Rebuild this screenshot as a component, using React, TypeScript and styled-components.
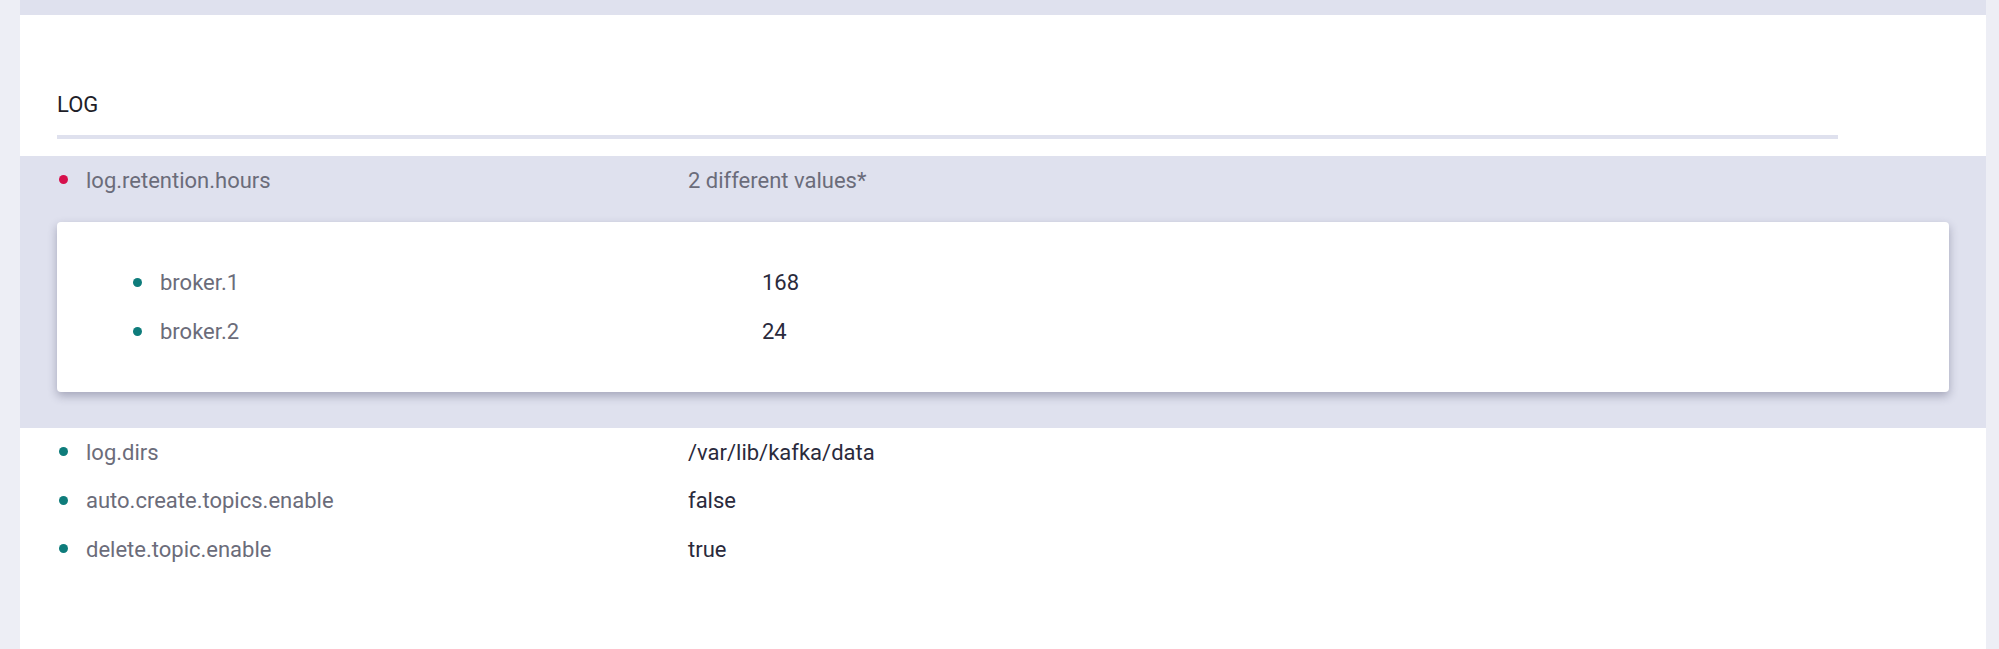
import React from "react";
import styled, { createGlobalStyle } from "styled-components";

const GlobalStyle = createGlobalStyle`
  html, body { margin: 0; padding: 0; }
  body {
    background: #edeef5;
    font-family: Roboto, "Liberation Sans", Arial, sans-serif;
    -webkit-font-smoothing: antialiased;
  }
`;

const Page = styled.div`
  display: flex;
  padding-left: 20px;
  padding-right: 13px;
  min-height: 649px;
`;

const Panel = styled.main`
  flex: 1;
  background: #ffffff;
  display: flex;
  flex-direction: column;
  min-height: 649px;
`;

const TopStrip = styled.div`
  height: 15px;
  background: #dfe1ee;
`;

const SectionHeader = styled.div`
  padding: 76.5px 148px 0 37px;
`;

const Title = styled.h2`
  margin: 0;
  font-size: 22px;
  line-height: 26px;
  font-weight: 400;
  color: #1e1e28;
  height: 26px;
`;

const Divider = styled.div`
  margin-top: 17.5px;
  height: 4px;
  background: #dfe1ee;
`;

const List = styled.div`
  margin-top: 17px;
  display: flex;
  flex-direction: column;
`;

const Expanded = styled.div`
  background: #dfe1ee;
  padding-bottom: 36px;
`;

const Row = styled.div<{ $height: number; $indent: number }>`
  display: grid;
  grid-template-columns: 9px 583px 1fr;
  column-gap: 19px;
  align-items: center;
  height: ${(p) => p.$height}px;
  padding-left: ${(p) => p.$indent}px;
  font-size: 22px;
`;

const Dot = styled.span<{ $color: string }>`
  width: 9px;
  height: 9px;
  border-radius: 50%;
  background: ${(p) => p.$color};
  margin-top: -1px;
`;

const Key = styled.span`
  color: #6b6c7a;
  white-space: nowrap;
  margin-left: -1px;
`;

const Value = styled.span<{ $muted?: boolean }>`
  color: ${(p) => (p.$muted ? "#6b6c7a" : "#2a2a3c")};
  white-space: nowrap;
  margin-left: -1px;
`;

const Card = styled.div`
  margin: 18px 37px 0 37px;
  background: #ffffff;
  border-radius: 4px;
  box-shadow: 0 4px 10px rgba(45, 45, 80, 0.33);
  padding: 36px 0;
  display: flex;
  flex-direction: column;
`;

const RED = "#d6104c";
const TEAL = "#0e7c7b";

const brokers = [
  { key: "broker.1", value: "168" },
  { key: "broker.2", value: "24" },
];

const rest = [
  { key: "log.dirs", value: "/var/lib/kafka/data" },
  { key: "auto.create.topics.enable", value: "false" },
  { key: "delete.topic.enable", value: "true" },
];

export default function App() {
  return (
    <>
      <GlobalStyle />
      <Page>
        <Panel>
          <TopStrip />
          <SectionHeader>
            <Title>LOG</Title>
            <Divider />
          </SectionHeader>
          <List>
            <Expanded>
              <Row $height={48} $indent={39}>
                <Dot $color={RED} />
                <Key>log.retention.hours</Key>
                <Value $muted>2 different values*</Value>
              </Row>
              <Card>
                {brokers.map((b) => (
                  <Row key={b.key} $height={49} $indent={76}>
                    <Dot $color={TEAL} />
                    <Key>{b.key}</Key>
                    <Value>{b.value}</Value>
                  </Row>
                ))}
              </Card>
            </Expanded>
            {rest.map((r) => (
              <Row key={r.key} $height={48.5} $indent={39}>
                <Dot $color={TEAL} />
                <Key>{r.key}</Key>
                <Value>{r.value}</Value>
              </Row>
            ))}
          </List>
        </Panel>
      </Page>
    </>
  );
}
